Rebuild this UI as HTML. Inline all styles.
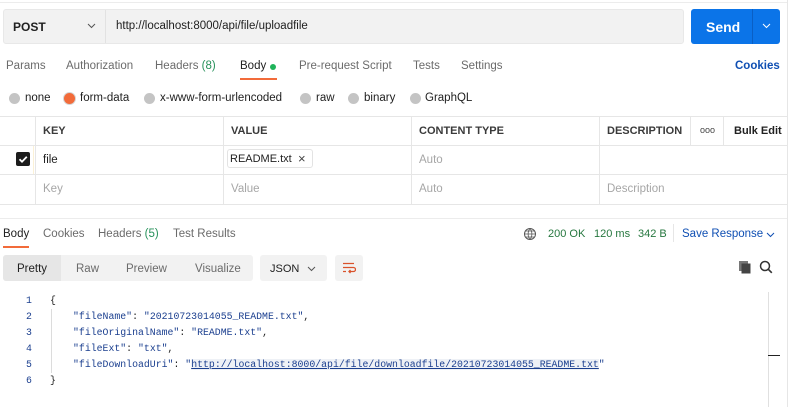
<!DOCTYPE html>
<html><head><style>
*{margin:0;padding:0;box-sizing:border-box}
body{width:800px;height:407px;background:#fff;font-family:"Liberation Sans",sans-serif;font-size:11.5px;color:#212121;position:relative;overflow:hidden}
.a{position:absolute;white-space:nowrap}
.g{color:#6b6b6b}
.ph{color:#a6a6a6}
.h{font-weight:bold;color:#3a3a3a;font-size:11px}
.rad{position:absolute;width:11px;height:11px;border-radius:50%;background:#c4c4c4}
.vl{position:absolute;width:1px;background:#e6e6e6}
.hl{position:absolute;height:1px;background:#e6e6e6}
.mono{font-family:"Liberation Mono",monospace;font-size:9.85px;color:#212121}
.k{color:#1b3f8f}
.s{color:#1b3f8f}
.ln{color:#1b3f8f;font-family:"Liberation Mono",monospace;font-size:9.85px}
</style></head><body>
<div class="hl" style="left:0;top:2px;width:787px;background:#ececec"></div>
<div class="vl" style="left:787px;top:0;height:407px;background:#e6e6e6"></div>

<div class="a" style="left:3px;top:9px;width:681px;height:35px;background:#f2f2f2;border:1px solid #e8e8e8;border-radius:3px"></div>
<div class="vl" style="left:105px;top:10px;height:33px;background:#e2e2e2"></div>
<div class="a" style="left:13px;top:20px;font-weight:bold;font-size:12px">POST</div>
<svg class="a" style="left:87px;top:23px" width="9" height="6"><path d="M1 1l3.5 3.5L8 1" stroke="#555" fill="none"/></svg>
<div class="a" style="left:116px;top:20px;font-size:11.5px">http://localhost:8000/api/file/uploadfile</div>

<div class="a" style="left:691px;top:9px;width:89px;height:35px;background:#0b74e8;border-radius:3px"></div>
<div class="vl" style="left:752px;top:9px;height:35px;background:#0a5fc4"></div>
<div class="a" style="left:706px;top:19px;color:#fff;font-weight:bold;font-size:14px">Send</div>
<svg class="a" style="left:762px;top:23px" width="9" height="6"><path d="M1 1l3.5 3.5L8 1" stroke="#fff" fill="none"/></svg>

<div class="a g" style="left:6px;top:60px">Params</div>
<div class="a g" style="left:66px;top:60px">Authorization</div>
<div class="a g" style="left:155px;top:60px">Headers <span style="color:#26915a">(8)</span></div>
<div class="a" style="left:240px;top:60px;color:#212121">Body</div>
<div class="a" style="left:270px;top:64px;width:6px;height:6px;border-radius:50%;background:#1fb35a"></div>
<div class="a" style="left:240px;top:78px;width:37px;height:2px;background:#f26b3a"></div>
<div class="a g" style="left:299px;top:60px">Pre-request Script</div>
<div class="a g" style="left:413px;top:60px">Tests</div>
<div class="a g" style="left:461px;top:60px">Settings</div>
<div class="a" style="left:735px;top:60px;color:#0f4fb3;font-weight:bold">Cookies</div>

<div class="rad" style="left:9px;top:93px"></div><div class="a" style="left:25px;top:92px">none</div>
<div class="rad" style="left:64px;top:93px;background:#f26b3a;box-shadow:0 0 0 1px #d6d6d6"></div><div class="a" style="left:80px;top:92px">form-data</div>
<div class="rad" style="left:144px;top:93px"></div><div class="a" style="left:160px;top:92px">x-www-form-urlencoded</div>
<div class="rad" style="left:300px;top:93px"></div><div class="a" style="left:316px;top:92px">raw</div>
<div class="rad" style="left:348px;top:93px"></div><div class="a" style="left:364px;top:92px">binary</div>
<div class="rad" style="left:410px;top:93px"></div><div class="a" style="left:425px;top:92px">GraphQL</div>

<div class="hl" style="left:0;top:116px;width:787px"></div>
<div class="hl" style="left:0;top:145px;width:787px"></div>
<div class="hl" style="left:0;top:174px;width:787px"></div>
<div class="hl" style="left:0;top:204px;width:787px"></div>
<div class="vl" style="left:35px;top:116px;height:88px"></div>
<div class="vl" style="left:223px;top:116px;height:88px"></div>
<div class="vl" style="left:411px;top:116px;height:88px"></div>
<div class="vl" style="left:599px;top:116px;height:88px"></div>
<div class="vl" style="left:690px;top:116px;height:29px"></div>
<div class="vl" style="left:723px;top:116px;height:29px"></div>
<div class="vl" style="left:33px;top:146px;height:28px;background:#fbf1d6"></div>
<div class="a h" style="left:43px;top:125px">KEY</div>
<div class="a h" style="left:231px;top:125px">VALUE</div>
<div class="a h" style="left:419px;top:125px">CONTENT TYPE</div>
<div class="a h" style="left:607px;top:125px">DESCRIPTION</div>
<div class="a" style="left:700px;top:125px;font-size:9px;color:#444">ooo</div>
<div class="a" style="left:734px;top:125px;font-weight:bold;font-size:11px">Bulk Edit</div>

<div class="a" style="left:16px;top:152px;width:14px;height:14px;background:#1c1c1c;border-radius:2px"></div>
<svg class="a" style="left:16px;top:152px" width="14" height="14"><path d="M3.5 7.2l2.5 2.5 4.8-5" stroke="#fff" stroke-width="1.8" fill="none"/></svg>
<div class="a" style="left:43px;top:154px">file</div>
<div class="a" style="left:227px;top:149px;width:86px;height:19px;border:1px solid #e3e3e3;border-radius:3px"></div>
<div class="a" style="left:230px;top:153px;font-size:11px">README.txt</div>
<div class="a" style="left:298px;top:151px;font-size:13px;color:#444">×</div>
<div class="a ph" style="left:419px;top:154px">Auto</div>
<div class="a ph" style="left:43px;top:183px">Key</div>
<div class="a ph" style="left:231px;top:183px">Value</div>
<div class="a ph" style="left:419px;top:183px">Auto</div>
<div class="a ph" style="left:607px;top:183px">Description</div>

<div class="hl" style="left:0;top:218px;width:787px;background:#ececec"></div>
<div class="a" style="left:3px;top:228px">Body</div>
<div class="a" style="left:3px;top:246px;width:26px;height:2px;background:#f26b3a"></div>
<div class="a g" style="left:43px;top:228px">Cookies</div>
<div class="a g" style="left:98px;top:228px">Headers <span style="color:#26915a">(5)</span></div>
<div class="a g" style="left:173px;top:228px">Test Results</div>
<svg class="a" style="left:523px;top:227px" width="14" height="14"><circle cx="7" cy="7" r="5.5" stroke="#555" fill="none"/><path d="M1.5 7h11M7 1.5c-2.5 3-2.5 8 0 11M7 1.5c2.5 3 2.5 8 0 11M3 4h8M3 10h8" stroke="#555" fill="none" stroke-width=".8"/></svg>
<div class="a" style="left:548px;top:228px;color:#26773f;font-size:11px">200 OK</div>
<div class="a" style="left:594px;top:228px;color:#26773f;font-size:11px">120 ms</div>
<div class="a" style="left:638px;top:228px;color:#26773f;font-size:11px">342 B</div>
<div class="vl" style="left:673px;top:224px;height:18px"></div>
<div class="a" style="left:682px;top:228px;color:#0f4fb3;font-size:11.5px">Save Response</div>
<svg class="a" style="left:766px;top:232px" width="9" height="6"><path d="M1 1l3.5 3.5L8 1" stroke="#0f4fb3" fill="none"/></svg>

<div class="a" style="left:3px;top:255px;width:250px;height:26px;background:#f2f2f2;border-radius:3px"></div>
<div class="a" style="left:3px;top:255px;width:58px;height:26px;background:#e6e6e6;border-radius:3px 0 0 3px"></div>
<div class="a" style="left:17px;top:263px">Pretty</div>
<div class="a g" style="left:76px;top:263px">Raw</div>
<div class="a g" style="left:126px;top:263px">Preview</div>
<div class="a g" style="left:195px;top:263px">Visualize</div>
<div class="a" style="left:260px;top:255px;width:67px;height:26px;background:#f2f2f2;border-radius:3px"></div>
<div class="a" style="left:270px;top:263px;font-size:11px">JSON</div>
<svg class="a" style="left:307px;top:266px" width="9" height="6"><path d="M1 1l3.5 3.5L8 1" stroke="#555" fill="none"/></svg>
<div class="a" style="left:335px;top:255px;width:28px;height:26px;background:#f2f2f2;border-radius:3px"></div>
<svg class="a" style="left:342px;top:262px" width="14" height="12"><path d="M1 1.5h11M1 5.5h10.5a2 2 0 0 1 0 4H7M8.5 8l-1.5 1.5 1.5 1.5M1 9.5h3" stroke="#d9532c" fill="none" stroke-width="1.3"/></svg>
<svg class="a" style="left:738px;top:260px" width="14" height="14"><rect x="1" y="1" width="9" height="10" fill="#777"/><rect x="3.5" y="3.5" width="9" height="10" fill="#444"/></svg>
<svg class="a" style="left:759px;top:260px" width="14" height="14"><circle cx="6" cy="6" r="4.5" stroke="#333" stroke-width="1.5" fill="none"/><path d="M9.3 9.3l3.5 3.5" stroke="#333" stroke-width="1.6"/></svg>

<div class="vl" style="left:768px;top:292px;height:115px;background:#e0e0e0"></div>
<div class="a" style="left:768px;top:355px;width:12px;height:1px;background:#222"></div>
<div class="vl" style="left:51px;top:309px;height:64px;background:#dcdcdc"></div>

<div class="a ln" style="left:26px;top:295px">1</div>
<div class="a ln" style="left:26px;top:311px">2</div>
<div class="a ln" style="left:26px;top:327px">3</div>
<div class="a ln" style="left:26px;top:343px">4</div>
<div class="a ln" style="left:26px;top:359px">5</div>
<div class="a ln" style="left:26px;top:375px">6</div>
<div class="a mono" style="left:50px;top:295px">{</div>
<div class="a mono" style="left:73px;top:311px"><span class="k">"fileName"</span>: <span class="s">"20210723014055_README.txt"</span>,</div>
<div class="a mono" style="left:73px;top:327px"><span class="k">"fileOriginalName"</span>: <span class="s">"README.txt"</span>,</div>
<div class="a mono" style="left:73px;top:343px"><span class="k">"fileExt"</span>: <span class="s">"txt"</span>,</div>
<div class="a mono" style="left:73px;top:359px"><span class="k">"fileDownloadUri"</span>: <span class="s">"<span style="background:#eef1f6;text-decoration:underline">http://localhost:8000/api/file/downloadfile/20210723014055_README.txt</span>"</span></div>
<div class="a mono" style="left:50px;top:375px">}</div>
</body></html>
